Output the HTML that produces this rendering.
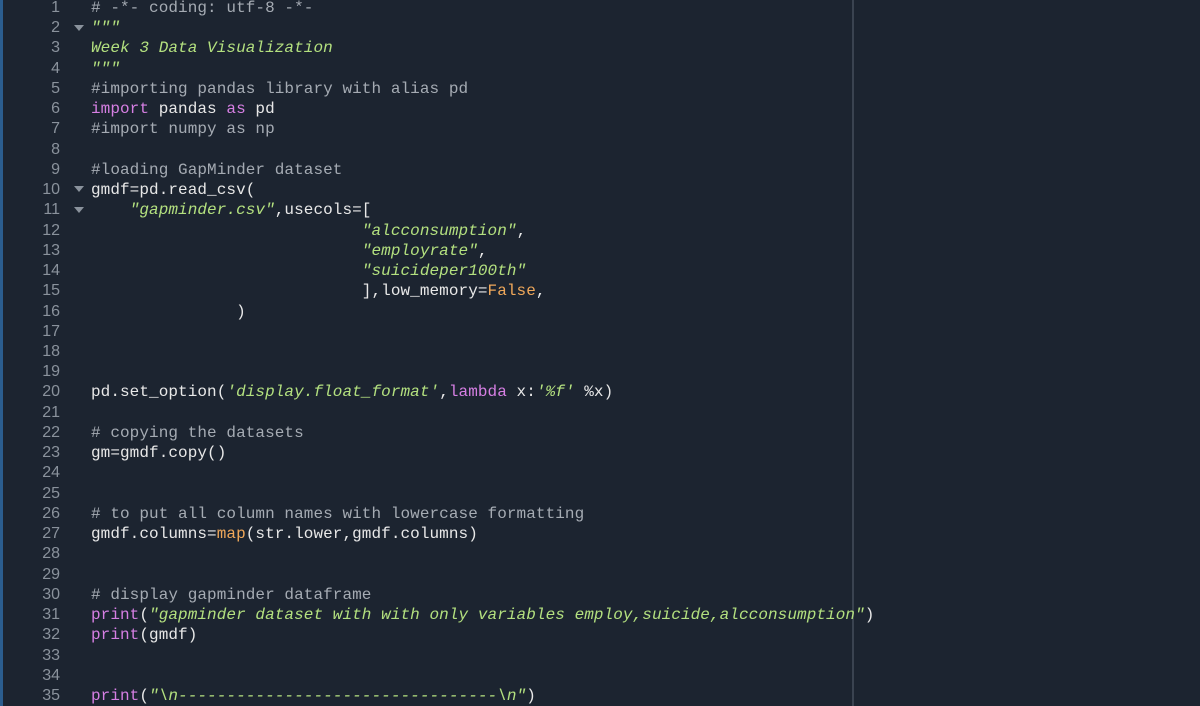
<!DOCTYPE html>
<html><head><meta charset="utf-8"><style>
html,body{margin:0;padding:0;width:1200px;height:706px;overflow:hidden;background:#1c2430;}
.ed{position:absolute;left:0;top:0;width:1200px;height:706px;background:#1c2430;}
.bl{position:absolute;left:0;top:0;width:3px;height:706px;background:#2b5d8e;}
.vl{position:absolute;left:852px;top:0;width:2px;height:706px;background:#3a4350;}
.g{position:absolute;left:0;top:-2px;width:60px;text-align:right;font:16px/20.24px "Liberation Sans",sans-serif;color:#8a929c;}
.c{position:absolute;left:91px;top:-2px;font:16px/20.24px "Liberation Mono",monospace;letter-spacing:0.07px;color:#e8e8e8;white-space:pre;}
.f{position:absolute;left:74px;width:0;height:0;border-left:5px solid transparent;border-right:5px solid transparent;border-top:6px solid #8a929c;}
.cm{color:#a5abb3}.s{color:#b3e07f;font-style:italic}.k{color:#d67fe3}.o{color:#f0a85a}
</style></head><body><div class="ed">
<div class="bl"></div><div class="vl"></div>
<div class="g">1<br>2<br>3<br>4<br>5<br>6<br>7<br>8<br>9<br>10<br>11<br>12<br>13<br>14<br>15<br>16<br>17<br>18<br>19<br>20<br>21<br>22<br>23<br>24<br>25<br>26<br>27<br>28<br>29<br>30<br>31<br>32<br>33<br>34<br>35</div>
<div class="f" style="top:25px"></div><div class="f" style="top:186px"></div><div class="f" style="top:207px"></div>
<div class="c"><span class="cm"># -*- coding: utf-8 -*-</span>
<span class="s">"""</span>
<span class="s">Week 3 Data Visualization</span>
<span class="s">"""</span>
<span class="cm">#importing pandas library with alias pd</span>
<span class="k">import</span> pandas <span class="k">as</span> pd
<span class="cm">#import numpy as np</span>

<span class="cm">#loading GapMinder dataset</span>
gmdf=pd.read_csv(
    <span class="s">"gapminder.csv"</span>,usecols=[
                            <span class="s">"alcconsumption"</span>,
                            <span class="s">"employrate"</span>,
                            <span class="s">"suicideper100th"</span>
                            ],low_memory=<span class="o">False</span>,
               )



pd.set_option(<span class="s">'display.float_format'</span>,<span class="k">lambda</span> x:<span class="s">'%f'</span> %x)

<span class="cm"># copying the datasets</span>
gm=gmdf.copy()


<span class="cm"># to put all column names with lowercase formatting</span>
gmdf.columns=<span class="o">map</span>(str.lower,gmdf.columns)


<span class="cm"># display gapminder dataframe</span>
<span class="k">print</span>(<span class="s">"gapminder dataset with with only variables employ,suicide,alcconsumption"</span>)
<span class="k">print</span>(gmdf)


<span class="k">print</span>(<span class="s">"\n---------------------------------\n"</span>)</div>
</div></body></html>
